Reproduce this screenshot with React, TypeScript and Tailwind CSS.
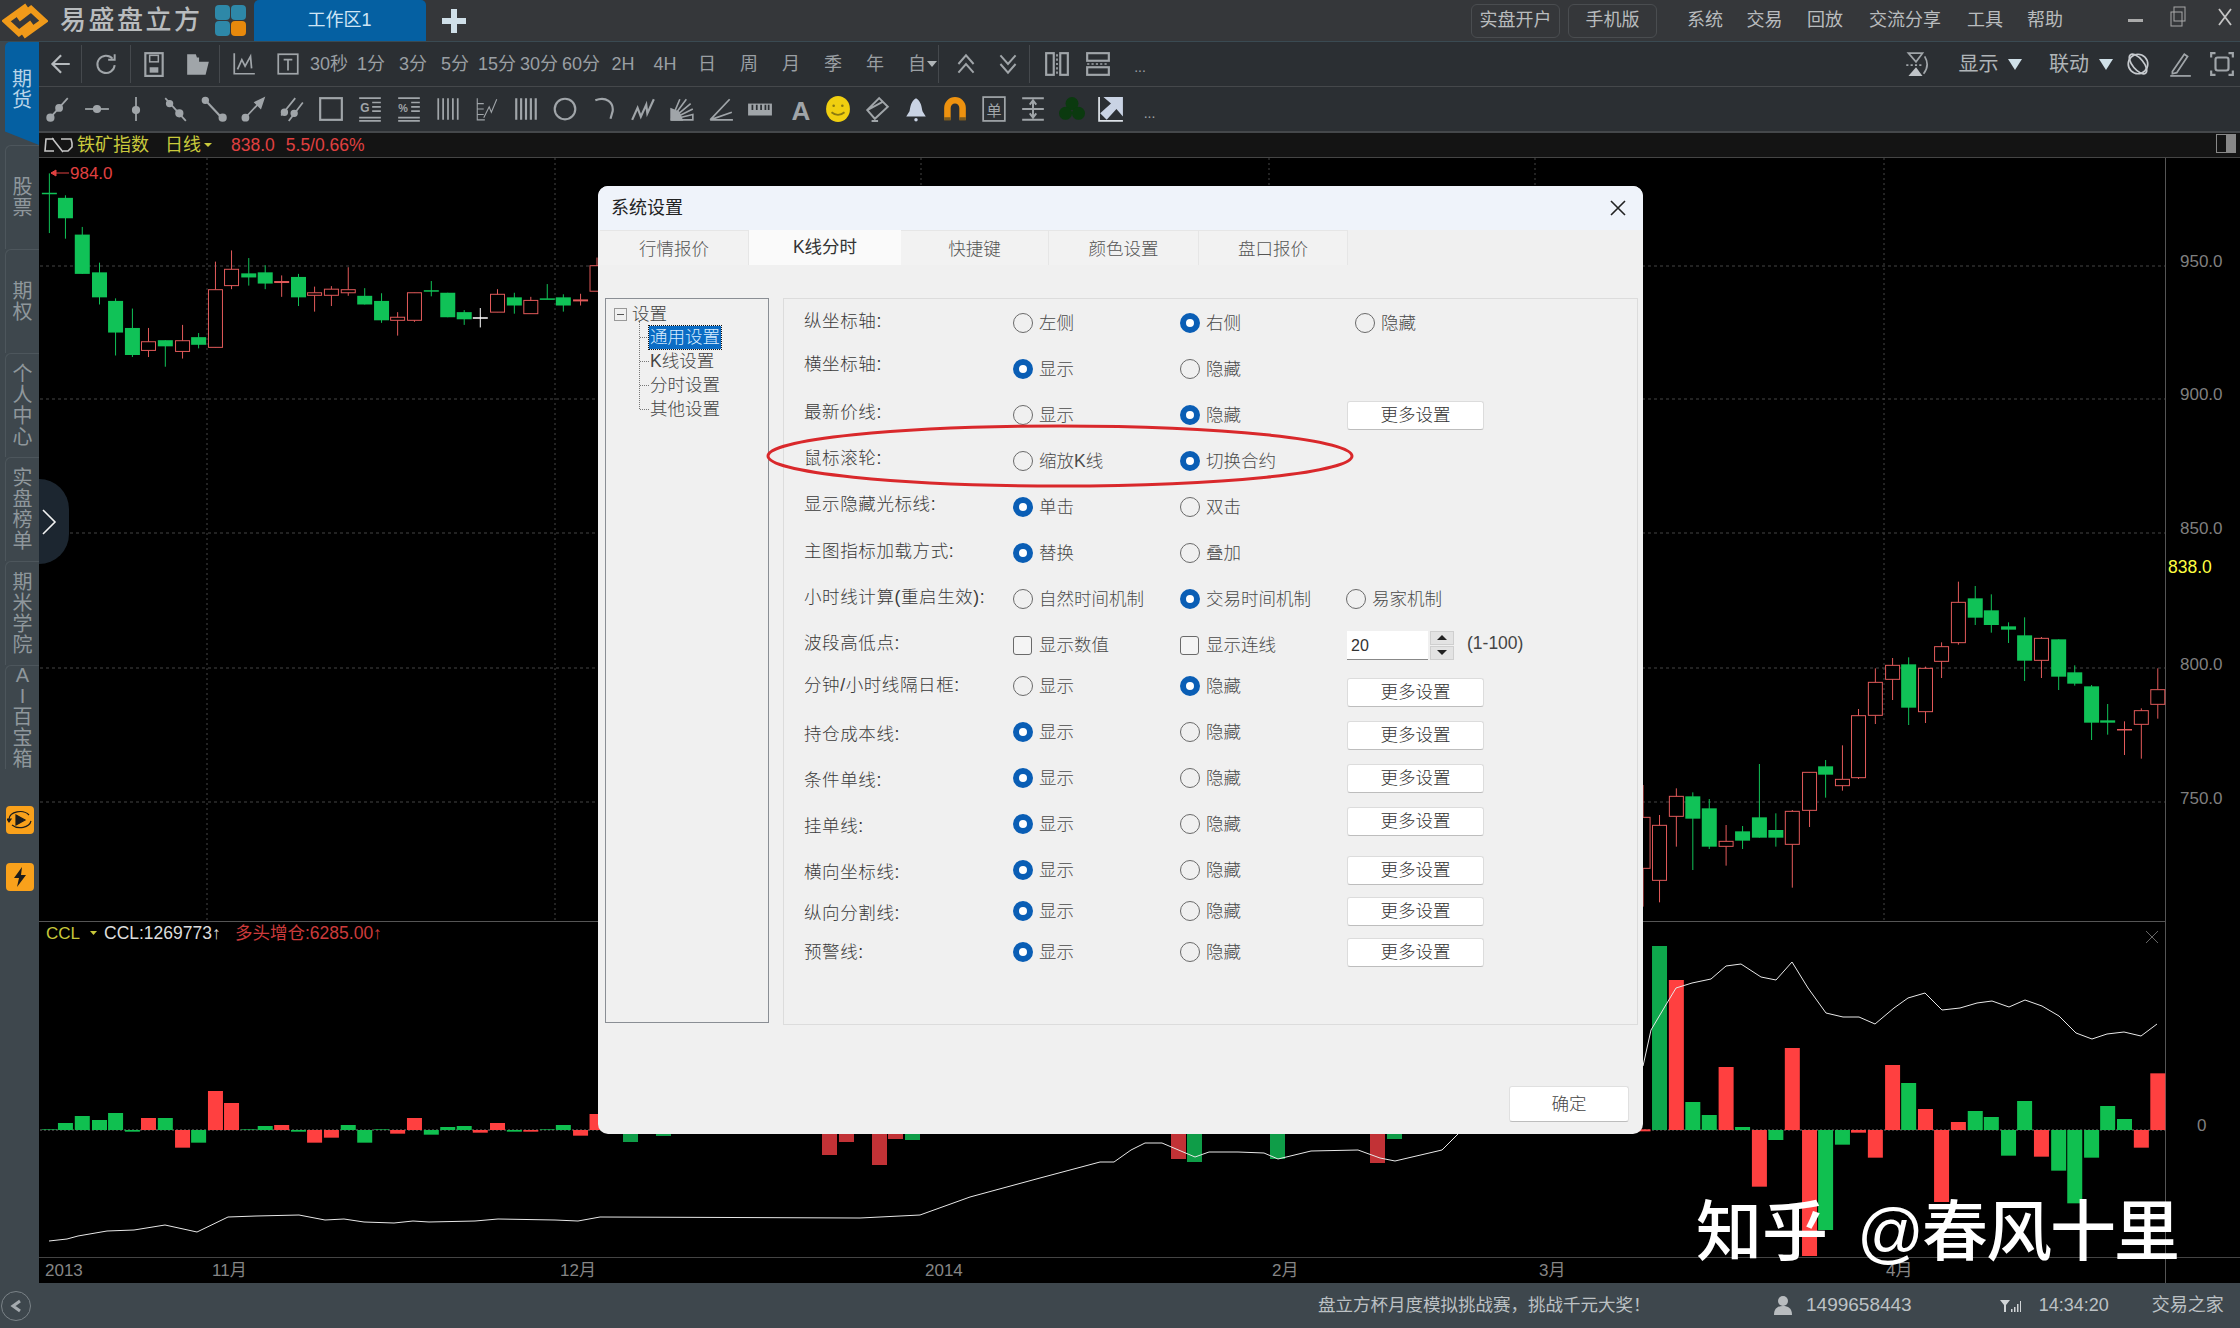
import React from 'react'

// candle data read off the picture: [x, bodyTop, bodyBottom, wickHigh, wickLow, colour]
const leftCandles: any[] = [
  [129, 123, 125, 85, 202, 'g'], [171, 133, 173, 128, 213, 'g'], [215, 205, 282, 190, 282, 'g'], [260, 279, 328, 260, 342, 'g'],
  [302, 335, 397, 330, 442, 'g'], [346, 388, 441, 350, 445, 'g'], [388, 415, 432, 388, 445, 'r'], [432, 412, 424, 412, 464, 'g'],
  [477, 413, 434, 382, 448, 'r'], [519, 406, 421, 398, 428, 'g'], [563, 313, 426, 258, 426, 'r'], [605, 273, 305, 236, 312, 'r'],
  [650, 281, 289, 251, 305, 'g'], [693, 279, 301, 265, 312, 'g'], [736, 297, 298, 285, 327, 'r'], [780, 288, 328, 282, 345, 'g'],
  [822, 319, 324, 307, 356, 'r'], [866, 312, 324, 306, 345, 'r'], [910, 313, 319, 269, 325, 'r'], [953, 325, 342, 310, 342, 'g'],
  [997, 335, 373, 320, 378, 'g'], [1039, 367, 373, 357, 403, 'r'], [1083, 319, 373, 319, 376, 'r'], [1127, 314, 316, 296, 326, 'g'],
  [1170, 319, 367, 319, 367, 'g'], [1213, 357, 371, 353, 382, 'g'], [1255, 367, 369, 349, 387, 'w'], [1300, 322, 357, 312, 357, 'r'],
  [1344, 328, 344, 319, 360, 'g'], [1387, 334, 360, 327, 360, 'r'], [1430, 330, 331, 302, 331, 'g'], [1472, 328, 344, 322, 356, 'g'],
  [1517, 333, 334, 321, 344, 'r'], [1560, 266, 316, 250, 316, 'r'],
]

const rightCandles: any[] = [
  [8, 832, 985, 735, 1100, 'r'], [51, 856, 1021, 825, 1087, 'r'], [95, 769, 829, 745, 920, 'r'], [138, 769, 836, 757, 990, 'g'],
  [181, 805, 920, 777, 927, 'g'], [225, 904, 919, 855, 977, 'r'], [268, 874, 902, 858, 927, 'g'], [312, 832, 893, 672, 893, 'g'],
  [355, 870, 893, 820, 920, 'g'], [398, 814, 913, 810, 1043, 'r'], [443, 697, 811, 697, 861, 'r'], [485, 679, 704, 660, 773, 'g'],
  [529, 718, 737, 616, 752, 'r'], [571, 527, 713, 507, 717, 'r'], [615, 427, 526, 385, 552, 'r'], [660, 376, 418, 354, 480, 'r'],
  [702, 373, 503, 352, 555, 'g'], [746, 385, 515, 380, 549, 'r'], [788, 320, 364, 307, 414, 'r'], [832, 187, 308, 125, 314, 'r'],
  [876, 175, 233, 138, 255, 'g'], [918, 211, 255, 163, 278, 'g'], [963, 259, 269, 247, 309, 'g'], [1005, 286, 362, 232, 423, 'g'],
  [1049, 295, 361, 291, 414, 'r'], [1094, 298, 410, 298, 450, 'g'], [1136, 397, 431, 376, 437, 'g'], [1180, 439, 548, 435, 600, 'g'],
  [1222, 541, 548, 492, 584, 'g'], [1266, 567, 571, 544, 645, 's'], [1310, 512, 553, 505, 656, 'r'], [1353, 449, 493, 385, 536, 'r'],
]

const leftBars: any[] = [
  [129, 628, 630, 'g'], [171, 609, 630, 'g'], [215, 588, 630, 'g'], [260, 600, 630, 'g'], [302, 579, 630, 'g'], [346, 630, 635, 'g'],
  [388, 594, 630, 'r'], [432, 594, 630, 'g'], [477, 630, 683, 'r'], [519, 630, 668, 'g'], [563, 513, 630, 'r'], [605, 549, 630, 'r'],
  [650, 628, 630, 'g'], [693, 618, 630, 'g'], [736, 615, 630, 'r'], [780, 630, 635, 'g'], [822, 630, 668, 'r'], [866, 630, 653, 'r'],
  [910, 615, 630, 'g'], [953, 630, 668, 'g'], [997, 628, 630, 'g'], [1039, 630, 641, 'r'], [1083, 594, 630, 'r'], [1127, 630, 644, 'g'],
  [1170, 621, 630, 'g'], [1213, 618, 630, 'g'], [1255, 630, 638, 'r'], [1300, 609, 630, 'r'], [1344, 630, 635, 'g'], [1387, 630, 635, 'r'],
  [1430, 628, 630, 'g'], [1472, 615, 630, 'g'], [1517, 630, 647, 'r'], [1560, 582, 630, 'r'],
]

const rightBars: any[] = [
  [8, 628, 634, 'r'], [51, 78, 630, 'd'], [95, 180, 630, 'r'], [138, 546, 630, 'g'], [181, 585, 630, 'g'], [225, 441, 630, 'r'],
  [268, 621, 630, 'g'], [312, 630, 800, 'r'], [355, 630, 660, 'g'], [398, 384, 630, 'r'], [443, 630, 1008, 'r'], [485, 630, 930, 'g'],
  [529, 630, 674, 'g'], [571, 630, 638, 'r'], [615, 630, 713, 'r'], [660, 435, 630, 'r'], [702, 489, 630, 'g'], [746, 567, 630, 'r'],
  [788, 630, 846, 'r'], [832, 606, 630, 'r'], [876, 573, 630, 'g'], [918, 591, 630, 'g'], [963, 630, 707, 'g'], [1005, 543, 630, 'g'],
  [1049, 630, 710, 'r'], [1094, 630, 752, 'g'], [1136, 630, 850, 'g'], [1180, 630, 713, 'g'], [1222, 558, 630, 'g'], [1266, 597, 630, 'g'],
  [1310, 630, 683, 'r'], [1353, 460, 630, 'r'],
]

// bars that show below the dialog, already in page pixels: [x, width, bottom, colour]
const midBars: any[] = [
  [623, 15, 1142, '#0f9d48'], [656, 15, 1136, '#0f9d48'], [822, 15, 1155, '#c23236'], [839, 15, 1142, '#c23236'], [872, 15, 1165, '#c23236'],
  [888, 15, 1139, '#c23236'], [905, 15, 1140, '#0f9d48'], [1171, 15, 1159, '#c23236'], [1187, 15, 1162, '#0f9d48'], [1270, 15, 1159, '#0f9d48'],
  [1370, 15, 1163, '#c23236'], [1387, 15, 1139, '#0f9d48'],
]

const ccLine = [
  [49, 1241], [67, 1239], [78, 1236], [107, 1231], [134, 1230], [165, 1225], [197, 1232], [228, 1217], [256, 1216], [299, 1215], [325, 1220],
  [344, 1219], [364, 1222], [394, 1223], [413, 1221], [429, 1222], [475, 1221], [498, 1219], [555, 1220], [578, 1221], [600, 1217],
  [860, 1218], [920, 1215], [970, 1197], [1040, 1178], [1100, 1162], [1114, 1162], [1131, 1150], [1145, 1143], [1162, 1143], [1195, 1157],
  [1209, 1152], [1238, 1152], [1264, 1153], [1278, 1159], [1311, 1151], [1358, 1150], [1380, 1158], [1395, 1161], [1442, 1150], [1462, 1130],
  [1643, 1066], [1651, 1030], [1667, 1003], [1676, 988], [1692, 983], [1711, 979], [1726, 966], [1741, 964], [1761, 977], [1776, 980],
  [1792, 962], [1808, 988], [1826, 1013], [1843, 1017], [1859, 1017], [1875, 1024], [1894, 1008], [1908, 998], [1925, 993], [1942, 1010],
  [1960, 1008], [1977, 1003], [1992, 1001], [2009, 1007], [2025, 1000], [2042, 1006], [2059, 1016], [2076, 1033], [2092, 1039], [2107, 1034],
  [2124, 1032], [2141, 1036], [2157, 1024],
]

const Candle = ({ c, sx, ox, oy, sy }: any) => {
  const x = ox + c[0] / sx
  const top = oy + c[1] / sy
  const bot = oy + c[2] / sy
  const hi = oy + c[3] / sy
  const lo = oy + c[4] / sy
  const col = c[5] === 'g' ? '#10c257' : c[5] === 'w' ? '#ffffff' : '#e25a5a'
  const isFilled = c[5] === 'g' || c[5] === 's'
  return (
    <g>
      <line x1={x} x2={x} y1={hi} y2={lo} stroke={col} strokeWidth={1} />
      {isFilled || c[5] === 'w' ? (
        <rect x={x - 7.5} y={top} width={15} height={Math.max(bot - top, 1.5)} fill={col} />
      ) : (
        <rect x={x - 7} y={top} width={14} height={Math.max(bot - top, 1)} fill="#000" stroke={col} strokeWidth={1} />
      )}
    </g>
  )
}

const Bar = ({ b, ox }: any) => {
  const x = ox + b[0] / 2.613
  const top = 920 + b[1] / 3
  const bot = 920 + b[2] / 3
  const fill = b[3] === 'g' ? '#10c050' : b[3] === 'd' ? '#0ea84c' : '#ff4040'
  return <rect x={x - 7.5} y={top} width={15} height={bot - top} fill={fill} />
}

const Chart = () => (
  <svg width="2201" height="1125" viewBox="39 158 2201 1125" className="block">
    <rect x="39" y="158" width="2201" height="1125" fill="#000" />
    {[266, 399, 533, 668, 802].map((y) => (
      <line key={y} x1="40" x2="2165" y1={y} y2={y} stroke="#444" strokeDasharray="3 3" />
    ))}
    {[207, 555, 921, 1269, 1535, 1884].map((x) => (
      <line key={x} x1={x} x2={x} y1="158" y2="921" stroke="#444" strokeDasharray="2 3" />
    ))}
    <line x1="2165.5" x2="2165.5" y1="158" y2="1283" stroke="#555" />
    <line x1="39" x2="2165" y1="921.5" y2="921.5" stroke="#555" />
    <line x1="39" x2="2240" y1="1257.5" y2="1257.5" stroke="#444" />

    {leftCandles.map((c, i) => <Candle key={i} c={c} ox={0} oy={130} sx={2.613} sy={1.96} />)}
    {rightCandles.map((c, i) => <Candle key={i} c={c} ox={1640} oy={540} sx={2.613} sy={3} />)}

    <path d="M51 173 H69 M51 173 l5 -3 v6 z" stroke="#e04040" fill="#e04040" strokeWidth="1" />
    <text x="70" y="179" fontSize="17" fill="#e04040">984.0</text>

    {[['950.0', 267], ['900.0', 400], ['850.0', 534], ['800.0', 670], ['750.0', 804]].map((t: any) => (
      <text key={t[0]} x="2180" y={t[1]} fontSize="17" fill="#7f7f7f">{t[0]}</text>
    ))}
    <text x="2168" y="573" fontSize="17.5" fill="#ffff40">838.0</text>

    <text x="46" y="939" fontSize="17" fill="#c8c83a">CCL</text>
    <path d="M90 931 h7 l-3.5 4 z" fill="#c8c83a" />
    <text x="104" y="939" fontSize="17.5" fill="#dddddd">CCL:1269773↑</text>
    <text x="235" y="939" fontSize="17.5" fill="#cc3b3b">多头增仓:6285.00↑</text>
    <path d="M2146 931 L2158 943 M2158 931 L2146 943" stroke="#666" />

    <line x1="40" x2="2165" y1="1130" y2="1130" stroke="#777" strokeDasharray="2 2" />
    {leftBars.map((b, i) => <Bar key={i} b={b} ox={0} />)}
    {rightBars.map((b, i) => <Bar key={i} b={b} ox={1640} />)}
    {midBars.map((b, i) => <rect key={i} x={b[0]} y="1130" width={b[1]} height={b[2] - 1130} fill={b[3]} />)}
    <polyline points={ccLine.map((p) => p.join(',')).join(' ')} fill="none" stroke="#e8e8e8" strokeWidth="1" />

    <text x="2197" y="1131" fontSize="17" fill="#7f7f7f">0</text>
    {[['2013', 45], ['11月', 212], ['12月', 560], ['2014', 925], ['2月', 1272], ['3月', 1539], ['4月', 1886]].map((t: any) => (
      <text key={t[0]} x={t[1]} y="1276" fontSize="17" fill="#858585">{t[0]}</text>
    ))}
  </svg>
)

const Ico = ({ children, size = 26, box = 24 }: any) => (
  <svg width={size} height={size} viewBox={`0 0 ${box} ${box}`} fill="none" stroke="#a0a5a9" strokeWidth="1.6">
    {children}
  </svg>
)

const drawTools: any[] = [
  <><path d="M3 22 L21 2" /><circle cx="5" cy="20" r="3" fill="#a0a5a9" /><circle cx="13" cy="11" r="2.8" fill="#a0a5a9" /></>,
  <><path d="M1 12 H23" /><circle cx="12" cy="12" r="3" fill="#a0a5a9" /></>,
  <><path d="M12 1 V23" /><circle cx="12" cy="13" r="3" fill="#a0a5a9" /></>,
  <><path d="M3 2 L22 23" /><circle cx="7" cy="7" r="2.6" fill="#a0a5a9" /><circle cx="16" cy="16" r="3" fill="#a0a5a9" /></>,
  <><path d="M4 4 L20 21" strokeWidth="2" /><circle cx="4" cy="4" r="2.6" fill="#a0a5a9" /><circle cx="20" cy="20" r="3" fill="#a0a5a9" /></>,
  <><path d="M4 21 L20 4" /><path d="M22 2 L14 6 L19 11 Z" fill="#a0a5a9" /><circle cx="5" cy="20" r="2.8" fill="#a0a5a9" /></>,
  <><path d="M2 18 L15 2 M9 23 L22 6" /><circle cx="5" cy="15" r="2.6" fill="#a0a5a9" /><circle cx="14" cy="16" r="2.6" fill="#a0a5a9" /></>,
  <rect x="2" y="2" width="20" height="20" strokeWidth="2" />,
  <><path d="M2 2 H22 M2 20 H22 M2 23 H22 M14 6 H22 M14 10 H22 M14 14 H22" /><text x="3" y="15" fontSize="11" fill="#a0a5a9" stroke="none" fontWeight="700">G</text></>,
  <><path d="M2 2 H22 M2 20 H22 M2 23 H22 M14 6 H22 M14 10 H22 M14 14 H22" /><text x="2" y="15" fontSize="10" fill="#a0a5a9" stroke="none" fontWeight="700">%</text></>,
  <path d="M3 2 V22 M7.5 2 V22 M12 2 V22 M16.5 2 V22 M21 2 V22" />,
  <path d="M3 2 V22 H10 M3 7 H9 M3 12 H9 M3 17 H9 M9 20 L14 10 L16 15 L21 3" strokeWidth="1" />,
  <path d="M3 2 V22 M7.5 2 V22 M12 2 V22 M16.5 2 V22 M21 2 V22" strokeWidth="2" />,
  <circle cx="12" cy="12" r="9.5" strokeWidth="2" />,
  <path d="M4 4 C14 0 21 6 20 14 L18 21" strokeWidth="2" />,
  <path d="M2 22 L7 11 L10 19 L15 8 L16 16 L22 3" strokeWidth="2" />,
  <><path d="M2 22 H22 V17 L2 22 L22 12 M2 22 L20 7 M2 22 L16 3 M2 22 L10 3" strokeWidth="1.5" /><path d="M2 22 V12 L9 15 L12 22 Z" fill="#a0a5a9" /></>,
  <path d="M2 22 H23 M2 22 L20 3 M2 22 L22 15" strokeWidth="1.6" />,
  <><rect x="1" y="7" width="22" height="11" fill="#a0a5a9" stroke="none" /><path d="M5 8 V13 M9 8 V13 M13 8 V13 M17 8 V13 M20 8 V13" stroke="#2b2f33" /></>,
  <text x="5" y="22" fontSize="24" fontWeight="700" fill="#a0a5a9" stroke="none">A</text>,
  <><ellipse cx="12" cy="12" rx="11" ry="12" fill="#f0cf10" stroke="none" /><circle cx="8" cy="9" r="1.2" fill="#8a7a10" stroke="none" /><circle cx="16" cy="9" r="1.2" fill="#8a7a10" stroke="none" /><path d="M6 15 Q12 20 18 15" stroke="#8a7a10" /></>,
  <path d="M14 2 L22 10 L10 21 L3 13 Z M3 13 L18 5 M7 23 H13" strokeWidth="1.8" />,
  <><path d="M12 2 C7 5 7 10 6 14 L3 19 H21 L18 14 C17 10 17 5 12 2 Z" fill="#c9d3e4" stroke="none" /><circle cx="12" cy="22" r="1.6" fill="#c9d3e4" stroke="none" /></>,
  <><path d="M5 22 V11 A7 7 0 0 1 19 11 V22" stroke="#ee920f" strokeWidth="6" /><path d="M2 21 H8 M16 21 H22" stroke="#7a5a20" strokeWidth="3" /></>,
  <><rect x="2" y="1" width="20" height="22" /><text x="5" y="18" fontSize="14" fill="#a0a5a9" stroke="none">单</text></>,
  <path d="M2 2 H22 M2 22 H22 M2 12 H22 M12 4 V20 M9 8 L12 4 L15 8 M9 16 L12 20 L15 16" strokeWidth="1.8" />,
  <><circle cx="12" cy="7" r="6" fill="#0b3a0f" stroke="none" /><circle cx="6" cy="16" r="6" fill="#0b3a0f" stroke="none" /><circle cx="18" cy="16" r="6" fill="#0b3a0f" stroke="none" /></>,
  <><path d="M1 1 V23 H23" stroke="#dde2e8" /><path d="M5 1 H23 V19 L17 12 L8 22 L2 16 L12 7 Z" fill="#c9d3e4" stroke="none" /></>,
]

const periods = ['30秒', '1分', '3分', '5分', '15分', '30分', '60分', '2H', '4H', '日', '周', '月', '季', '年', '自']

const Sep = () => <div className="w-px h-[38px] bg-[#45494d]" />
const Slot = ({ w, children }: any) => <div className={`${w} flex items-center justify-center shrink-0`}>{children}</div>

const Toolbar1 = () => (
  <div className="h-[45px] flex items-center bg-[#2b2f33] border-b border-[#45484b] text-[18px] text-[#9a9fa3]">
    <Slot w="w-[42px]"><Ico><path d="M13 4 L5 12 L13 20 M5 12 H21" stroke="#b5babd" strokeWidth="2" /></Ico></Slot>
    <Sep />
    <Slot w="w-[48px]"><Ico><path d="M18 7 A8 8 0 1 0 20 13" strokeWidth="1.8" /><path d="M14 8 L20 8 L20 3" strokeWidth="1.8" /></Ico></Slot>
    <Sep />
    <Slot w="w-[46px]"><Ico><rect x="4" y="2" width="16" height="21" strokeWidth="2" /><rect x="8" y="4" width="8" height="6" strokeWidth="1.4" /><rect x="8" y="15" width="8" height="5" fill="#a0a5a9" stroke="none" /></Ico></Slot>
    <Slot w="w-[42px]"><Ico><path d="M2 3 H10 L11 6 H13 V10 H22 L19 22 H2 Z" fill="#a0a5a9" stroke="none" /></Ico></Slot>
    <Sep />
    <Slot w="w-[48px]"><Ico><path d="M3 2 V21 H22" /><path d="M6 17 L10 8 L13 14 L18 5 L19 16" /></Ico></Slot>
    <Slot w="w-[40px]"><Ico><rect x="3" y="3" width="18" height="18" /><path d="M8 8 H16 M12 8 V18" /></Ico></Slot>
    {periods.map((p) => (
      <div key={p} className="w-[42px] shrink-0 text-center whitespace-nowrap relative">
        {p}
        {p === '自' && <span className="absolute right-[1px] top-[10px] w-0 h-0 border-x-[5px] border-x-transparent border-t-[6px] border-t-[#b0b5b8]" />}
      </div>
    ))}
    <Sep />
    <Slot w="w-[42px] ml-[6px]"><Ico><path d="M5 12 L12 4 L19 12 M5 20 L12 12 L19 20" strokeWidth="1.8" /></Ico></Slot>
    <Slot w="w-[42px]"><Ico><path d="M5 4 L12 12 L19 4 M5 12 L12 20 L19 12" strokeWidth="1.8" /></Ico></Slot>
    <Sep />
    <Slot w="w-[54px]"><Ico><rect x="2" y="2" width="7" height="20" strokeWidth="2" /><rect x="15" y="2" width="7" height="20" strokeWidth="2" /><path d="M12 3 V21" strokeDasharray="2 2" /></Ico></Slot>
    <Slot w="w-[28px]"><Ico><rect x="2" y="2" width="20" height="7" strokeWidth="2" /><rect x="2" y="15" width="20" height="7" strokeWidth="2" /><path d="M2 12 H22" strokeDasharray="2 2" /></Ico></Slot>
    <Slot w="w-[56px]"><span className="text-[14px] pt-[6px]">...</span></Slot>
    <div className="ml-auto flex items-center">
      <Slot w="w-[36px]"><Ico><path d="M5 2 H18 L12 10 Z" /><path d="M3 13 H19" strokeDasharray="2 2" /><path d="M5 23 L12 15 L18 23 Z" fill="#c0c4c8" stroke="none" /><path d="M20 5 C23 10 23 16 19 21" /></Ico></Slot>
      <div className="w-[59px] text-center ml-[15px] text-[20px] text-[#b0b5b8] whitespace-nowrap">显示</div>
      <span className="w-0 h-0 border-x-[7px] border-x-transparent border-t-[11px] border-t-[#cfe0e8]" />
      <div className="w-[60px] text-center ml-[17px] text-[20px] text-[#b0b5b8] whitespace-nowrap">联动</div>
      <span className="w-0 h-0 border-x-[7px] border-x-transparent border-t-[11px] border-t-[#cfe0e8]" />
      <Slot w="w-[36px] ml-[7px]"><Ico><circle cx="12" cy="12" r="9" stroke="#c6cace" strokeWidth="1.6" /><ellipse cx="12" cy="12" rx="11" ry="5" transform="rotate(50 12 12)" stroke="#c6cace" /></Ico></Slot>
      <Slot w="w-[48px]"><Ico><path d="M5 19 L16 3 L19 5 L9 20 L5 21 Z" /><path d="M3 23 H22" /></Ico></Slot>
      <Slot w="w-[36px]"><Ico><path d="M6 2 H2 V6 M18 2 H22 V6 M6 22 H2 V18 M18 22 H22 V18" strokeWidth="2" /><rect x="6" y="6" width="12" height="12" rx="2" strokeWidth="2" /></Ico></Slot>
    </div>
  </div>
)

const Toolbar2 = () => (
  <div className="h-[44px] flex items-center bg-[#2b2f33] -ml-[1px] text-[#a0a5a9]">
    {drawTools.map((t, i) => (
      <div key={i} className="w-[39px] shrink-0 flex justify-center">
        <Ico>{t}</Ico>
      </div>
    ))}
    <div className="w-[39px] text-center text-[14px] pt-[8px]">...</div>
  </div>
)

const InfoBar = () => (
  <div className="h-[27px] flex items-center bg-[#141414] border-t-2 border-[#45484b] border-b border-b-[#454545] text-[18px] pl-[5px] relative">
    <svg width="29" height="16" viewBox="0 0 29 16" fill="none" stroke="#c6c6c6" strokeWidth="1.6"><path d="M10 2 H2 L1 14 H10 M8 1 L19 15 M17 2 H27 L28 6 V10 L24 14 H19" /></svg>
    <span className="ml-[4px] text-[#c9c93c] whitespace-nowrap">铁矿指数</span>
    <span className="ml-[16px] text-[#c9c93c] whitespace-nowrap">日线</span>
    <span className="ml-[3px] w-0 h-0 border-x-[4px] border-x-transparent border-t-[4px] border-t-[#c9c93c]" />
    <span className="ml-[19px] text-[17.5px] text-[#e04040]">838.0</span>
    <span className="ml-[11px] text-[17.5px] text-[#e04040]">5.5/0.66%</span>
    <div className="absolute right-[4px] top-[1px] w-[20px] h-[19px] border border-[#888] flex justify-end">
      <div className="w-[9px] bg-[#888]" />
    </div>
  </div>
)

const sideTabs = ['股票', '期权', '个人中心', '实盘榜单', '期米学院', 'AI百宝箱']

const Sidebar = () => (
  <div className="w-[39px] shrink-0 bg-[#3e474d] flex flex-col pl-[5px] text-[20px] text-[#8f979c] leading-[21px]">
    <div className="h-[103px] bg-[#0560a2] rounded-tl-[5px] [clip-path:polygon(0_0,100%_0,100%_100%,0_87%)] flex flex-col items-center justify-center text-[#b8d4e8] pb-[8px]">
      <span>期</span>
      <span>货</span>
    </div>
    {sideTabs.map((t) => (
      <div key={t} className="h-[104px] rounded-tl-[6px] border-l border-t border-[#4d565c] flex flex-col items-center justify-center">
        {Array.from(t).map((ch, i) => <span key={i} className="h-[21px]">{ch}</span>)}
      </div>
    ))}
    <div className="mt-[37px] w-[28px] h-[28px] ml-[1px] rounded-[4px] bg-[#f9a11b] flex items-center justify-center">
      <svg width="26" height="20" viewBox="0 0 26 20" fill="none" stroke="#1c1c1c" strokeWidth="1.2"><path d="M2 9 A11 8 0 0 1 22 5 M24 11 A11 8 0 0 1 5 15" /><path d="M9 5 L18 10 L9 15 Z" fill="#1c1c1c" /><path d="M0 9 L4 9 L2 12 Z" fill="#1c1c1c" /></svg>
    </div>
    <div className="mt-[29px] w-[28px] h-[28px] ml-[1px] rounded-[4px] bg-[#f9a11b] flex items-center justify-center">
      <svg width="14" height="20" viewBox="0 0 14 20" fill="#1c1c1c"><path d="M9 0 L1 11 H6 L4 20 L13 8 H8 Z" /></svg>
    </div>
  </div>
)

const Radio = ({ on }: any) => (
  <span className={on ? 'w-5 h-5 shrink-0 rounded-full border-[6px] border-[#0a5eb5] bg-white' : 'w-5 h-5 shrink-0 rounded-full border border-[#6a6a6a]'} />
)

const Opt = ({ text, on, w, check }: any) => (
  <div className={`${w} flex items-center shrink-0`}>
    {check ? <span className="w-[19px] h-[19px] shrink-0 rounded-[3px] border border-[#6a6a6a] bg-[#f4f4f4] mr-[1px]" /> : <Radio on={on} />}
    <span className="ml-[6px] text-[#4a4a4a] whitespace-nowrap">{text}</span>
  </div>
)

const MoreBtn = ({ cls }: any) => (
  <button className={`w-[137px] h-[29px] shrink-0 rounded-[3px] bg-white border border-[#dcdcdc] border-b-[#bdbdbd] text-[#333] text-[17.5px] leading-[27px] ${cls || ''}`}>更多设置</button>
)

const rows: any[] = [
  { label: '纵坐标轴:', lc: 'mb-[4px]', mt: 'mt-0', a: ['左侧', 0], b: ['右侧', 1], c: ['隐藏', 0] },
  { label: '横坐标轴:', lc: 'mb-[10px]', mt: 'mt-[22px]', a: ['显示', 1], b: ['隐藏', 0] },
  { label: '最新价线:', lc: 'mb-[6px]', mt: 'mt-[22px]', a: ['显示', 0], b: ['隐藏', 1], btn: '' },
  { label: '鼠标滚轮:', lc: 'mb-[6px]', mt: 'mt-[22px]', a: ['缩放K线', 0], b: ['切换合约', 1] },
  { label: '显示隐藏光标线:', lc: 'mb-[6px]', mt: 'mt-[22px]', a: ['单击', 1], b: ['双击', 0] },
  { label: '主图指标加载方式:', lc: 'mb-[4px]', mt: 'mt-[22px]', a: ['替换', 1], b: ['叠加', 0] },
  { label: '小时线计算(重启生效):', lc: 'mb-[4px]', mt: 'mt-[22px]', a: ['自然时间机制', 0], b: ['交易时间机制', 1], d: ['易家机制', 0] },
  { label: '波段高低点:', lc: 'mb-[4px]', mt: 'mt-[22px]', check: true },
  { label: '分钟/小时线隔日框:', lc: 'mb-[2px]', mt: 'mt-[17px]', a: ['显示', 0], b: ['隐藏', 1], btn: 'mt-[12px]' },
  { label: '持仓成本线:', lc: 'mt-[4px]', mt: 'mt-[22px]', a: ['显示', 1], b: ['隐藏', 0], btn: 'mt-[6px]' },
  { label: '条件单线:', lc: 'mt-[4px]', mt: 'mt-[22px]', a: ['显示', 1], b: ['隐藏', 0], btn: '' },
  { label: '挂单线:', lc: 'mt-[4px]', mt: 'mt-[22px]', a: ['显示', 1], b: ['隐藏', 0], btn: 'mb-[6px]' },
  { label: '横向坐标线:', lc: 'mt-[4px]', mt: 'mt-[22px]', a: ['显示', 1], b: ['隐藏', 0], btn: '' },
  { label: '纵向分割线:', lc: 'mt-[4px]', mt: 'mt-[17px]', a: ['显示', 1], b: ['隐藏', 0], btn: '' },
  { label: '预警线:', lc: '', mt: 'mt-[17px]', a: ['显示', 1], b: ['隐藏', 0], btn: '' },
]

const SettingRow = ({ r }: any) => (
  <div className={`${r.mt} h-6 flex items-center`}>
    <div className={`w-[209px] shrink-0 whitespace-nowrap text-[#3a3a3a] tracking-[0.6px] ${r.lc}`}>{r.label}</div>
    {r.check ? (
      <>
        <Opt w="w-[167px]" text="显示数值" check />
        <Opt w="w-[167px]" text="显示连线" check />
        <div className="w-[81px] h-[29px] shrink-0 bg-white border-b border-[#888] pl-[4px] text-[16px] leading-[29px] text-[#333]">20</div>
        <div className="ml-[2px] w-[24px] shrink-0 flex flex-col gap-[1px]">
          <div className="h-[14px] bg-[#e3e3e3] border border-[#cfcfcf] flex items-center justify-center"><span className="w-0 h-0 border-x-[5px] border-x-transparent border-b-[5px] border-b-[#222]" /></div>
          <div className="h-[14px] bg-[#e3e3e3] border border-[#cfcfcf] flex items-center justify-center"><span className="w-0 h-0 border-x-[5px] border-x-transparent border-t-[5px] border-t-[#222]" /></div>
        </div>
        <span className="ml-[13px] text-[17.5px] text-[#444] mb-[4px] whitespace-nowrap">(1-100)</span>
      </>
    ) : (
      <>
        <Opt w="w-[167px]" text={r.a[0]} on={r.a[1]} />
        <Opt w={r.d ? 'w-[166px]' : 'w-[167px]'} text={r.b[0]} on={r.b[1]} />
        {r.c && <div className="ml-[8px]"><Opt w="w-[100px]" text={r.c[0]} on={r.c[1]} /></div>}
        {r.d && <Opt w="w-[120px]" text={r.d[0]} on={r.d[1]} />}
        {r.btn !== undefined && <MoreBtn cls={r.btn} />}
      </>
    )}
  </div>
)

const tabs = [
  ['行情报价', 'w-[149px]'],
  ['K线分时', 'w-[152px]'],
  ['快捷键', 'w-[148px]'],
  ['颜色设置', 'w-[150px]'],
  ['盘口报价', 'w-[149px]'],
]

const Dialog = () => (
  <div className="absolute left-[598px] top-[186px] w-[1045px] h-[948px] rounded-[10px] bg-[#f0f0f0] text-[17.5px] font-light overflow-hidden">
    <div className="h-[44px] bg-[#eff3fa] flex items-center justify-between pl-[13px] pr-[16px]">
      <span className="text-[18px] text-[#222] font-normal">系统设置</span>
      <svg width="18" height="18" viewBox="0 0 18 18" stroke="#222" strokeWidth="1.6"><path d="M2 2 L16 16 M16 2 L2 16" /></svg>
    </div>
    <div className="h-[35px] flex pl-[2px] bg-[#f0f0f0]">
      {tabs.map((t) => (
        <div key={t[0]} className={t[0] === 'K线分时' ? `${t[1]} bg-[#fafafa] flex items-center justify-center text-[#333] font-normal` : `${t[1]} bg-[#f2f2f2] border-t border-r border-[#e6e6e6] flex items-center justify-center text-[#555] pt-[3px]`}>
          {t[0]}
        </div>
      ))}
    </div>
    <div className="mt-[33px] flex items-start pl-[7px]">
      <div className="w-[164px] h-[725px] border border-[#8a8e94] shrink-0 text-[#444]">
        <div className="mt-[3px] h-6 flex items-center pl-[8px]">
          <span className="w-[13px] h-[13px] border border-[#999] flex items-center justify-center"><span className="w-[7px] h-px bg-[#555]" /></span>
          <span className="ml-[5px]">设置</span>
        </div>
        <div className="-mt-[5px] ml-[33px] h-[88px] border-l border-dotted border-[#777] pt-[4px]">
          {['通用设置', 'K线设置', '分时设置', '其他设置'].map((t, i) => (
            <div key={t} className="h-6 flex items-center">
              <span className="w-[9px] border-t border-dotted border-[#777]" />
              <span className={i === 0 ? 'h-[23px] leading-[23px] bg-[#0b6cc4] text-[#d8ecff] outline-1 outline-dotted outline-[#111] px-[1px]' : 'pl-[1px]'}>{t}</span>
            </div>
          ))}
        </div>
      </div>
      <div className="ml-[14px] w-[855px] h-[727px] border border-[#dcdcdc] shrink-0 pt-[12px] pl-[20px]">
        {rows.map((r) => <SettingRow key={r.label} r={r} />)}
      </div>
    </div>
    <div className="mt-[61px] flex justify-end pr-[14px]">
      <button className="w-[120px] h-[36px] rounded-[3px] bg-white border border-[#e0e0e0] border-b-[#bdbdbd] text-[#444]">确定</button>
    </div>
    <svg width="590" height="66" viewBox="0 0 590 66" fill="none" className="absolute left-[168px] top-[237px]">
      <ellipse cx="294" cy="33" rx="292" ry="30" stroke="#d9282b" strokeWidth="3" />
    </svg>
  </div>
)

const menus = [
  ['系统', 'w-[60px]'],
  ['交易', 'w-[59px]'],
  ['回放', 'w-[62px]'],
  ['交流分享', 'w-[98px]'],
  ['工具', 'w-[62px]'],
  ['帮助', 'w-[58px]'],
]

const TopBar = () => (
  <div className="h-[42px] shrink-0 flex items-center bg-[#35373a] border-b border-[#3a4a52] text-[18px] text-[#b9bcbe]">
    <svg width="46" height="36" viewBox="0 0 46 36" fill="none" stroke="#f09a1a" strokeWidth="6" className="ml-[2px] shrink-0">
      <path d="M25 3 L4 18 L17 30 L30 20" />
      <path d="M21 33 L42 18 L29 6 L16 16" />
    </svg>
    <span className="ml-[12px] text-[26px] tracking-[2.5px] whitespace-nowrap font-medium">易盛盘立方</span>
    <div className="ml-[12px] w-[31px] h-[31px] grid grid-cols-2 gap-[1px] shrink-0">
      <span className="rounded-[4px] bg-[#2e88a8]" />
      <span className="rounded-[4px] bg-[#2e88a8]" />
      <span className="rounded-[4px] bg-[#2e88a8]" />
      <span className="rounded-[4px] bg-[#e8890c]" />
    </div>
    <div className="ml-[8px] w-[172px] h-[41px] rounded-t-[5px] bg-[#0560a2] flex items-center justify-center text-[#cfe5f5] shrink-0">工作区1</div>
    <svg width="26" height="26" viewBox="0 0 26 26" fill="#cfdfe8" className="ml-[15px]"><path d="M10 1 H16 V10 H25 V16 H16 V25 H10 V16 H1 V10 H10 Z" /></svg>
    <div className="ml-auto flex items-center">
      <div className="w-[89px] h-[34px] rounded-[6px] border border-[#4a4d50] flex items-center justify-center whitespace-nowrap">实盘开户</div>
      <div className="ml-[8px] w-[89px] h-[34px] rounded-[6px] border border-[#4a4d50] flex items-center justify-center whitespace-nowrap">手机版</div>
      <div className="ml-[18px] flex">
        {menus.map((m) => <div key={m[0]} className={`${m[1]} text-center whitespace-nowrap`}>{m[0]}</div>)}
      </div>
      <div className="ml-[36px] w-[50px] flex justify-center"><span className="w-[15px] h-[3px] bg-[#aaa]" /></div>
      <div className="w-[36px] flex justify-center pb-[8px]">
        <svg width="18" height="22" viewBox="0 0 18 22" fill="none" stroke="#a8a8a8"><rect x="5" y="1" width="11" height="14" /><rect x="2" y="6" width="11" height="14" /></svg>
      </div>
      <div className="w-[44px] pl-[14px] flex justify-center pb-[8px]">
        <svg width="14" height="18" viewBox="0 0 14 18" stroke="#c4c4c4" strokeWidth="1.8"><path d="M1 1 L13 17 M13 1 L1 17" /></svg>
      </div>
    </div>
  </div>
)

const StatusBar = () => (
  <div className="h-[45px] shrink-0 bg-[#3e474d] flex items-center text-[18px] text-[#bcc1c4]">
    <div className="ml-[1px] w-[30px] h-[30px] rounded-full border border-[#7a8287] flex items-center justify-center">
      <svg width="12" height="14" viewBox="0 0 12 14" fill="none" stroke="#a5abaf" strokeWidth="3"><path d="M10 2 L3 7 L10 12" /></svg>
    </div>
    <span className="ml-[1287px] whitespace-nowrap text-[17.5px] w-[333px] shrink-0">{'盘立方杯月度模拟挑战赛\uFF0C挑战千元大奖\uFF01'}</span>
    <svg width="18" height="19" viewBox="0 0 18 19" fill="#b8bcbf" className="ml-[123px] shrink-0"><circle cx="9" cy="5" r="5" /><path d="M0 19 C0 12 4 10 9 10 C14 10 18 12 18 19 Z" /></svg>
    <span className="ml-[14px] text-[19px]">1499658443</span>
    <svg width="21" height="12" viewBox="0 0 21 12" fill="#d0d4d6" className="ml-[88px] shrink-0"><path d="M0 0 H10 L6 5 V12 H4 V5 Z" /><path d="M11 9 h1.5 v3 h-1.5 z M14 7 h1.5 v5 h-1.5 z M17 4 h1.5 v8 h-1.5 z M20 1 h1 v11 h-1 z" /></svg>
    <span className="ml-[18px] whitespace-nowrap">14:34:20</span>
    <span className="ml-[43px] whitespace-nowrap">交易之家</span>
  </div>
)

export default function App() {
  return (
    <div className="relative w-[2240px] h-[1328px] overflow-hidden flex flex-col bg-[#3e474d] [font-family:'Liberation_Sans','Noto_Sans_CJK_SC',sans-serif]">
      <TopBar />
      <div className="flex flex-1 min-h-0">
        <Sidebar />
        <div className="flex-1 flex flex-col min-w-0">
          <Toolbar1 />
          <Toolbar2 />
          <InfoBar />
          <Chart />
        </div>
      </div>
      <StatusBar />

      {/* collapse handle */}
      <div className="absolute left-[39px] top-[479px] w-[30px] h-[85px] rounded-r-[42px] bg-[#1c2630] flex items-center pl-[3px]">
        <svg width="15" height="26" viewBox="0 0 15 26" fill="none" stroke="#f2f2f2" strokeWidth="1.6"><path d="M1 1 L13 13 L1 25" /></svg>
      </div>

      <Dialog />

      {/* watermark */}
      <div className="absolute left-[1696px] top-[1190px] flex items-center text-white text-[66px] leading-[84px] font-medium whitespace-nowrap">
        <span>知乎</span>
        <span className="ml-[29px] tracking-[-2px]">@春风十里</span>
      </div>
    </div>
  )
}
